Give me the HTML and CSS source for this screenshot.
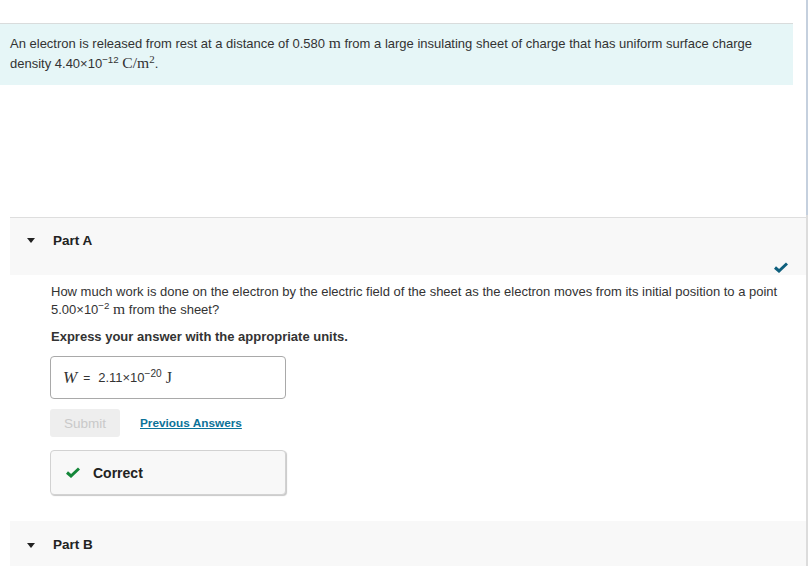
FILE: index.html
```html
<!DOCTYPE html>
<html>
<head>
<meta charset="utf-8">
<link rel="stylesheet" href="styles.css">
</head>
<body>
<div class="page">
  <div class="main">
    <div class="intro">
      <p>An electron is released from rest at a distance of 0.580 <span class="mj">m</span> from a large insulating sheet of charge that has uniform surface charge density 4.40×10<sup>−12</sup> <span class="mj">C/m<sup>2</sup></span>.</p>
    </div>
    <div class="spacer"></div>
    <div class="part">
      <div class="part-head">
        <span class="caret"></span>
        <span class="part-title">Part A</span>
        <svg class="done" width="14" height="11" viewBox="0 0 14 11"><path d="M1 5.5 L5 9 L13 1.5" fill="none" stroke="#0e5f7d" stroke-width="3"/></svg>
      </div>
      <div class="part-body">
        <p class="q">How much work is done on the electron by the electric field of the sheet as the electron moves from its initial position to a point 5.00×10<sup>−2</sup> <span class="mj">m</span> from the sheet?</p>
        <p class="instr">Express your answer with the appropriate units.</p>
        <div class="answer"><span class="var">W</span><span class="eq">=</span><span class="val">2.11×10<sup>−20</sup></span><span class="mj unit">J</span></div>
        <div class="actions">
          <span class="submit">Submit</span>
          <a class="prev" href="#">Previous Answers</a>
        </div>
        <div class="correct">
          <svg width="14" height="11" viewBox="0 0 14 11"><path d="M1 5.5 L5 9 L13 1.5" fill="none" stroke="#15873a" stroke-width="3"/></svg>
          <span>Correct</span>
        </div>
      </div>
    </div>
    <div class="part partb">
      <div class="part-head">
        <span class="caret"></span>
        <span class="part-title">Part B</span>
      </div>
    </div>
  </div>
  <div class="rail"></div>
</div>
</body>
</html>
```
FILE: styles.css
```css
html, body {
  margin: 0;
  padding: 0;
  background: #fff;
  font-family: "Liberation Sans", Arial, sans-serif;
  color: #333;
}
.page {
  display: flex;
  width: 810px;
  height: 566px;
  overflow: hidden;
}
.main {
  width: 806px;
  padding-top: 23px;
}
.rail {
  width: 2px;
  height: 566px;
  background: linear-gradient(#c5d0de 0, #c5d0de 215px, #dcdcdc 215px);
}
.intro {
  width: 793px;
  box-sizing: border-box;
  border-top: 1px solid #d9dcdc;
  background: #e6f6f7;
  height: 62px;
  padding: 10px 10px 0 10px;
}
.intro p {
  margin: 0;
  font-size: 13px;
  line-height: 20px;
}
sup {
  font-size: 0.75em;
  line-height: 0;
  vertical-align: 0.5em;
}
.mj {
  font-family: "Liberation Serif", "Times New Roman", serif;
  font-size: 1.2em;
  line-height: 0;
}
.mj sup { font-size: 0.7em; }
.spacer { height: 132px; }
.part {
  margin-left: 10px;
}
.part-head {
  position: relative;
  display: flex;
  align-items: center;
  height: 57px;
  border-top: 1px solid #dedede;
  background: #f8f8f8;
  padding-left: 17px;
}
.caret {
  width: 0;
  height: 0;
  border-left: 4px solid transparent;
  border-right: 4px solid transparent;
  border-top: 5px solid #222;
  margin-right: 18px;
  margin-top: -12px;
}
.part-title {
  font-weight: bold;
  font-size: 13.5px;
  color: #222;
  margin-top: -12px;
  line-height: 16px;
}
.done {
  position: absolute;
  right: 18px;
  bottom: 2px;
}
.part-body {
  padding: 8px 0 0 41px;
}
.q {
  margin: 0;
  font-size: 13px;
  line-height: 18px;
  width: 740px;
}
.instr {
  margin: 9px 0 0 0;
  font-size: 13px;
  font-weight: bold;
  line-height: 18px;
}
.answer {
  margin-top: 10px;
  margin-left: -1px;
  width: 236px;
  height: 43px;
  box-sizing: border-box;
  border: 1px solid #a9a9a9;
  border-radius: 4px;
  display: flex;
  align-items: center;
  padding-left: 12px;
  font-size: 13px;
}
.var {
  font-family: "Liberation Serif", serif;
  font-style: italic;
  font-size: 17px;
}
.eq { font-size: 12px; margin: 0 8px 0 6px; }
.val sup { font-size: 0.78em; }
.unit { font-size: 16px; margin-left: 4px; }
.actions {
  display: flex;
  align-items: center;
  margin-top: 10px;
  margin-left: -1px;
  height: 28px;
}
.submit {
  width: 70px;
  height: 28px;
  background: #eeeeee;
  border-radius: 3px;
  color: #c9c9c9;
  font-size: 13.5px;
  display: flex;
  align-items: center;
  justify-content: center;
}
.prev {
  margin-left: 20px;
  color: #0b7299;
  font-weight: bold;
  font-size: 11.8px;
  text-decoration: underline;
}
.correct {
  margin-top: 13px;
  margin-left: -1px;
  width: 236px;
  height: 45px;
  box-sizing: border-box;
  border: 1px solid #d2d2d2;
  border-radius: 4px;
  background: #f8f8f8;
  box-shadow: 1px 1px 1px #c8c8c8;
  display: flex;
  align-items: center;
  padding-left: 15px;
}
.correct span {
  margin-left: 13px;
  font-weight: bold;
  font-size: 14px;
  color: #222;
}
.partb {
  margin-top: 26px;
}
.partb .part-head {
  border-top: none;
  height: 48px;
}
.partb .part-title, .partb .caret { margin-top: 0; }
```
